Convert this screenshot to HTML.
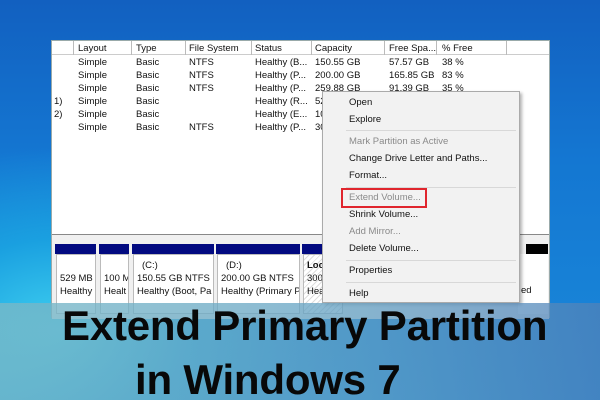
<!DOCTYPE html>
<html><head><style>
*{margin:0;padding:0;box-sizing:border-box}
html,body{width:600px;height:400px;overflow:hidden}
body{position:relative;font-family:"Liberation Sans",sans-serif;
background:radial-gradient(ellipse 380px 260px at 60px 330px,#3fd0f0 0%,#1aa0e0 35%,transparent 70%),linear-gradient(180deg,#1260c0 0%,#1477d2 40%,#1a8ada 100%);}
.win{position:absolute;left:51px;top:40px;width:499px;height:278px;background:#fff;border:1px solid #9aa;}
.hdr{position:absolute;left:0;top:0;width:100%;height:14px;background:#fff;border-bottom:1px solid #ccc;font-size:9.5px;color:#111}
.c{position:absolute;white-space:nowrap}
.sep{position:absolute;top:0;height:14px;border-left:1px solid #bbb}
.row{position:absolute;left:0;font-size:9.5px;color:#111;height:13px;width:100%}
.gray{position:absolute;left:0;top:193px;width:100%;height:85px;background:#f0f0f0;border-top:1px solid #888}
.bar{position:absolute;top:9px;height:10px;background:#020a80}
.box{position:absolute;top:19px;height:60px;background:#fff;border:1px solid #bbb;font-size:9.5px;color:#111;line-height:13px;padding:4px 3px;overflow:hidden;white-space:nowrap}
.menu{position:absolute;left:322px;top:91px;width:198px;height:212px;background:#f2f2f2;border:1px solid #aaa;box-shadow:2px 2px 3px rgba(0,0,0,.3);font-size:9.5px;color:#111}
.mi{position:absolute;left:26px}
.dis{color:#8a8a8a}
.ms{position:absolute;left:23px;right:3px;border-top:1px solid #d8d8d8}
.band{position:absolute;left:0;top:303px;width:600px;height:97px;background:linear-gradient(90deg,rgba(120,185,200,.8),rgba(100,160,195,.75) 60%,rgba(80,130,185,.75))}
.t{position:absolute;font-weight:bold;color:#080808;font-size:42px;white-space:nowrap;letter-spacing:-0.2px}
</style></head><body>
<div class="win">
 <div class="hdr">
  <span class="sep" style="left:21px"></span><span class="sep" style="left:79px"></span><span class="sep" style="left:133px"></span><span class="sep" style="left:199px"></span><span class="sep" style="left:259px"></span><span class="sep" style="left:332px"></span><span class="sep" style="left:384px"></span><span class="sep" style="left:454px"></span>
  <span class="c" style="left:26px;top:2px">Layout</span><span class="c" style="left:84px;top:2px">Type</span><span class="c" style="left:137px;top:2px">File System</span><span class="c" style="left:203px;top:2px">Status</span><span class="c" style="left:263px;top:2px">Capacity</span><span class="c" style="left:337px;top:2px">Free Spa...</span><span class="c" style="left:390px;top:2px">% Free</span>
 </div>
 <div class="row" style="top:16px"><span class="c" style="left:26px">Simple</span><span class="c" style="left:84px">Basic</span><span class="c" style="left:137px">NTFS</span><span class="c" style="left:203px">Healthy (B...</span><span class="c" style="left:263px">150.55 GB</span><span class="c" style="left:337px">57.57 GB</span><span class="c" style="left:390px">38 %</span></div>
 <div class="row" style="top:29px"><span class="c" style="left:26px">Simple</span><span class="c" style="left:84px">Basic</span><span class="c" style="left:137px">NTFS</span><span class="c" style="left:203px">Healthy (P...</span><span class="c" style="left:263px">200.00 GB</span><span class="c" style="left:337px">165.85 GB</span><span class="c" style="left:390px">83 %</span></div>
 <div class="row" style="top:42px"><span class="c" style="left:26px">Simple</span><span class="c" style="left:84px">Basic</span><span class="c" style="left:137px">NTFS</span><span class="c" style="left:203px">Healthy (P...</span><span class="c" style="left:263px">259.88 GB</span><span class="c" style="left:337px">91.39 GB</span><span class="c" style="left:390px">35 %</span></div>
 <div class="row" style="top:55px"><span class="c" style="left:2px">1)</span><span class="c" style="left:26px">Simple</span><span class="c" style="left:84px">Basic</span><span class="c" style="left:203px">Healthy (R...</span><span class="c" style="left:263px">52</span></div>
 <div class="row" style="top:68px"><span class="c" style="left:2px">2)</span><span class="c" style="left:26px">Simple</span><span class="c" style="left:84px">Basic</span><span class="c" style="left:203px">Healthy (E...</span><span class="c" style="left:263px">10</span></div>
 <div class="row" style="top:81px"><span class="c" style="left:26px">Simple</span><span class="c" style="left:84px">Basic</span><span class="c" style="left:137px">NTFS</span><span class="c" style="left:203px">Healthy (P...</span><span class="c" style="left:263px">30</span></div>
 <div class="gray">
  <div class="bar" style="left:3px;width:41px"></div><div class="bar" style="left:47px;width:30px"></div><div class="bar" style="left:80px;width:82px"></div><div class="bar" style="left:164px;width:84px"></div><div class="bar" style="left:250px;width:30px"></div><div class="bar" style="left:474px;width:22px;background:#000"></div>
  <div class="box" style="left:4px;width:40px"><br>529 MB<br>Healthy</div>
  <div class="box" style="left:48px;width:29px"><br>100 M<br>Healt</div>
  <div class="box" style="left:81px;width:81px"><span style="padding-left:5px">(C:)</span><br>150.55 GB NTFS<br>Healthy (Boot, Pa</div>
  <div class="box" style="left:165px;width:83px"><span style="padding-left:5px">(D:)</span><br>200.00 GB NTFS<br>Healthy (Primary P</div>
  <div class="box" style="left:251px;width:40px;background:repeating-linear-gradient(135deg,#fff 0 3px,#ddd 3px 4px)"><b>Loca</b><br>300.<br>Hea</div>
  <div class="box" style="left:466px;width:30px;border:none;background:#fff"><br><br>ed</div>
 </div>
</div>
<div class="menu">
 <span class="mi" style="top:5px">Open</span>
 <span class="mi" style="top:22px">Explore</span>
 <div class="ms" style="top:38px"></div>
 <span class="mi dis" style="top:44px">Mark Partition as Active</span>
 <span class="mi" style="top:61px">Change Drive Letter and Paths...</span>
 <span class="mi" style="top:78px">Format...</span>
 <div class="ms" style="top:95px"></div>
 <div style="position:absolute;left:18px;top:96px;width:86px;height:20px;border:2px solid #e0262e"></div>
 <span class="mi dis" style="top:100px">Extend Volume...</span>
 <span class="mi" style="top:117px">Shrink Volume...</span>
 <span class="mi dis" style="top:134px">Add Mirror...</span>
 <span class="mi" style="top:151px">Delete Volume...</span>
 <div class="ms" style="top:168px"></div>
 <span class="mi" style="top:173px">Properties</span>
 <div class="ms" style="top:190px"></div>
 <span class="mi" style="top:196px">Help</span>
</div>
<div class="band"></div>
<div class="t" style="left:62px;top:302px">Extend Primary Partition</div>
<div class="t" style="left:135px;top:356px">in Windows 7</div>
</body></html>
